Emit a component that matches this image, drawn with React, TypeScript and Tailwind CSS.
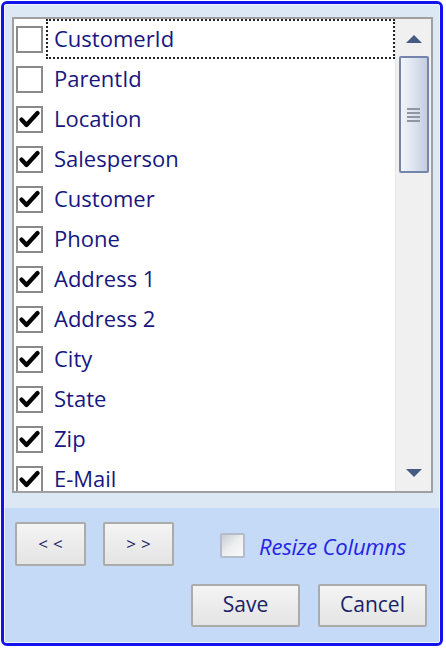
import React from "react";

const items: { label: string; checked: boolean }[] = [
  { label: "CustomerId", checked: false },
  { label: "ParentId", checked: false },
  { label: "Location", checked: true },
  { label: "Salesperson", checked: true },
  { label: "Customer", checked: true },
  { label: "Phone", checked: true },
  { label: "Address 1", checked: true },
  { label: "Address 2", checked: true },
  { label: "City", checked: true },
  { label: "State", checked: true },
  { label: "Zip", checked: true },
  { label: "E-Mail", checked: true },
];

const font = { fontFamily: '"Open Sans", "Noto Sans", sans-serif' };

function Check({ checked }: { checked: boolean }) {
  return (
    <div className="w-[27px] h-[27px] shrink-0 border-2 border-[#8a8a8a] bg-white flex items-center justify-center">
      {checked && (
        <svg width="21" height="19" viewBox="0 0 21 19">
          <path d="M2.5 9.5 L7.5 15 L18.5 3" fill="none" stroke="#000" strokeWidth="4.2" strokeLinecap="round" strokeLinejoin="round" />
        </svg>
      )}
    </div>
  );
}

function Btn({ children, w, h }: { children: React.ReactNode; w: string; h: string }) {
  return (
    <div
      className={`${w} ${h} shrink-0 border-2 border-[#ababab] rounded-[2px] bg-gradient-to-b from-[#f4f4f4] to-[#e4e4e4] flex items-center justify-center text-[#1a2266]`}
    >
      {children}
    </div>
  );
}

export default function App() {
  return (
    <div className="w-[446px] h-[648px] bg-white pt-[1px] pl-[1px]" style={font}>
      <div className="w-[442px] h-[645px] border-[3px] border-[#1212ee] rounded-[6px] overflow-hidden">
        <div className="w-full h-full border border-[#eef4fc] flex flex-col">
          {/* top section */}
          <div className="bg-[#dde8f5] pt-[12px] pl-[7px] pr-[6px] pb-[15px]">
            <div className="h-[476px] border-2 border-[#a0a0a0] bg-white flex overflow-hidden">
              <div className="flex-1 flex flex-col overflow-hidden">
                {items.map((it, i) => (
                  <div key={it.label} className="h-[40px] shrink-0 flex items-center pl-[2px]">
                    <Check checked={it.checked} />
                    <div
                      className={`ml-[3px] flex-1 h-[40px] flex items-center pl-[6px] text-[22px] text-[#17177f] ${
                        i === 0 ? "border-2 border-dotted border-[#222]" : "border-2 border-transparent"
                      }`}
                    >
                      <span className="leading-none -mt-[3px]">{it.label}</span>
                    </div>
                  </div>
                ))}
              </div>
              {/* scrollbar */}
              <div className="w-[36px] shrink-0 bg-[#f0f0f0] border-l border-[#e6e6e6] flex flex-col items-center">
                <div className="h-[37px] w-full flex items-center justify-center pt-[2px]">
                  <svg width="16" height="8" viewBox="0 0 16 8">
                    <polygon points="0,8 16,8 8,0" fill="#475a82" />
                  </svg>
                </div>
                <div className="w-[30px] h-[117px] border-2 border-[#7584aa] rounded-[2px] bg-gradient-to-r from-[#f2f4f8] via-[#dde3ef] to-[#c4cde0] flex flex-col items-center justify-center gap-[2px]">
                  <div className="w-[13px] h-[2px] bg-[#8f96a6]" />
                  <div className="w-[13px] h-[2px] bg-[#8f96a6]" />
                  <div className="w-[13px] h-[2px] bg-[#8f96a6]" />
                  <div className="w-[13px] h-[2px] bg-[#8f96a6]" />
                </div>
                <div className="flex-1" />
                <div className="h-[37px] w-full flex items-center justify-center">
                  <svg width="16" height="8" viewBox="0 0 16 8">
                    <polygon points="0,0 16,0 8,8" fill="#475a82" />
                  </svg>
                </div>
              </div>
            </div>
          </div>
          {/* bottom section */}
          <div className="flex-1 bg-[#c4daf6] pt-[14px] pl-[10px] pr-[12px] flex flex-col">
            <div className="flex items-center">
              <Btn w="w-[71px]" h="h-[44px]">
                <span className="text-[17px] tracking-[5px] pl-[5px]">{"<<"}</span>
              </Btn>
              <div className="w-[17px]" />
              <Btn w="w-[71px]" h="h-[44px]">
                <span className="text-[17px] tracking-[5px] pl-[5px]">{">>"}</span>
              </Btn>
              <div className="ml-[46px] mt-[2px] w-[25px] h-[25px] border-2 border-[#b3bcc8] rounded-[2px] bg-gradient-to-br from-[#c9cdd2] via-[#eceef0] to-[#fafafa]" />
              <span className="ml-[14px] text-[22px] italic text-[#2424e6] mt-[4px] tracking-[-0.2px]">Resize Columns</span>
            </div>
            <div className="flex justify-end gap-[18px] mt-[18px]">
              <Btn w="w-[109px]" h="h-[43px]">
                <span className="text-[21px] -mt-[2px]">Save</span>
              </Btn>
              <Btn w="w-[109px]" h="h-[43px]">
                <span className="text-[21px] -mt-[2px]">Cancel</span>
              </Btn>
            </div>
          </div>
        </div>
      </div>
    </div>
  );
}
